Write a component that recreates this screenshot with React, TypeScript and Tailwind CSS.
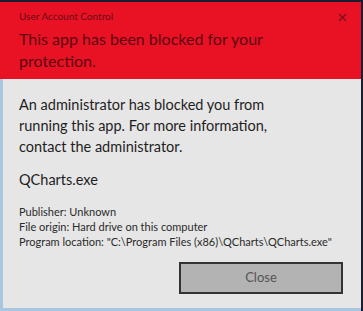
import React from "react";

export default function App() {
  const font = { fontFamily: 'Lato, "Noto Sans", sans-serif' };
  return (
    <div className="w-[363px] h-[311px] flex flex-col border-t-2 border-r-2 border-[#1b1b33] bg-[#e6e6e6]" style={font}>
      <div className="h-[77px] bg-[#e81224] relative pl-[19px] pt-[8px] shrink-0">
        <div className="text-[10px] leading-[12px] text-[#6a0a14]">User Account Control</div>
        <div className="mt-[6px] text-[16px] leading-[22px] text-[#5c0612] w-[280px]">
          This app has been blocked for your protection.
        </div>
        <svg className="absolute right-[14px] top-[11px]" width="9" height="9" viewBox="0 0 9 9">
          <path d="M1 1L8 8M8 1L1 8" stroke="#7a1020" strokeWidth="1.3" />
        </svg>
      </div>
      <div className="flex-1 flex flex-col border-l-[3px] border-b-[3px] border-[#a9c6de] pl-[16px] pr-[16px]">
        <div className="mt-[15px] text-[14.5px] leading-[21px] text-[#1e1e1e] w-[270px]">
          An administrator has blocked you from running this app. For more information, contact the administrator.
        </div>
        <div className="mt-[12px] text-[14.5px] leading-[21px] text-[#1e1e1e]">QCharts.exe</div>
        <div className="mt-[14px] text-[11px] leading-[15px] text-[#2a2a2a] whitespace-nowrap">
          <div>Publisher: Unknown</div>
          <div>File origin: Hard drive on this computer</div>
          <div>Program location: "C:\Program Files (x86)\QCharts\QCharts.exe"</div>
        </div>
        <div className="flex justify-end mt-[13px] pr-[2px]">
          <button className="w-[164px] h-[32px] bg-[#b3b3b3] border-2 border-[#333333] text-[13px] text-[#555555]">
            Close
          </button>
        </div>
      </div>
    </div>
  );
}
